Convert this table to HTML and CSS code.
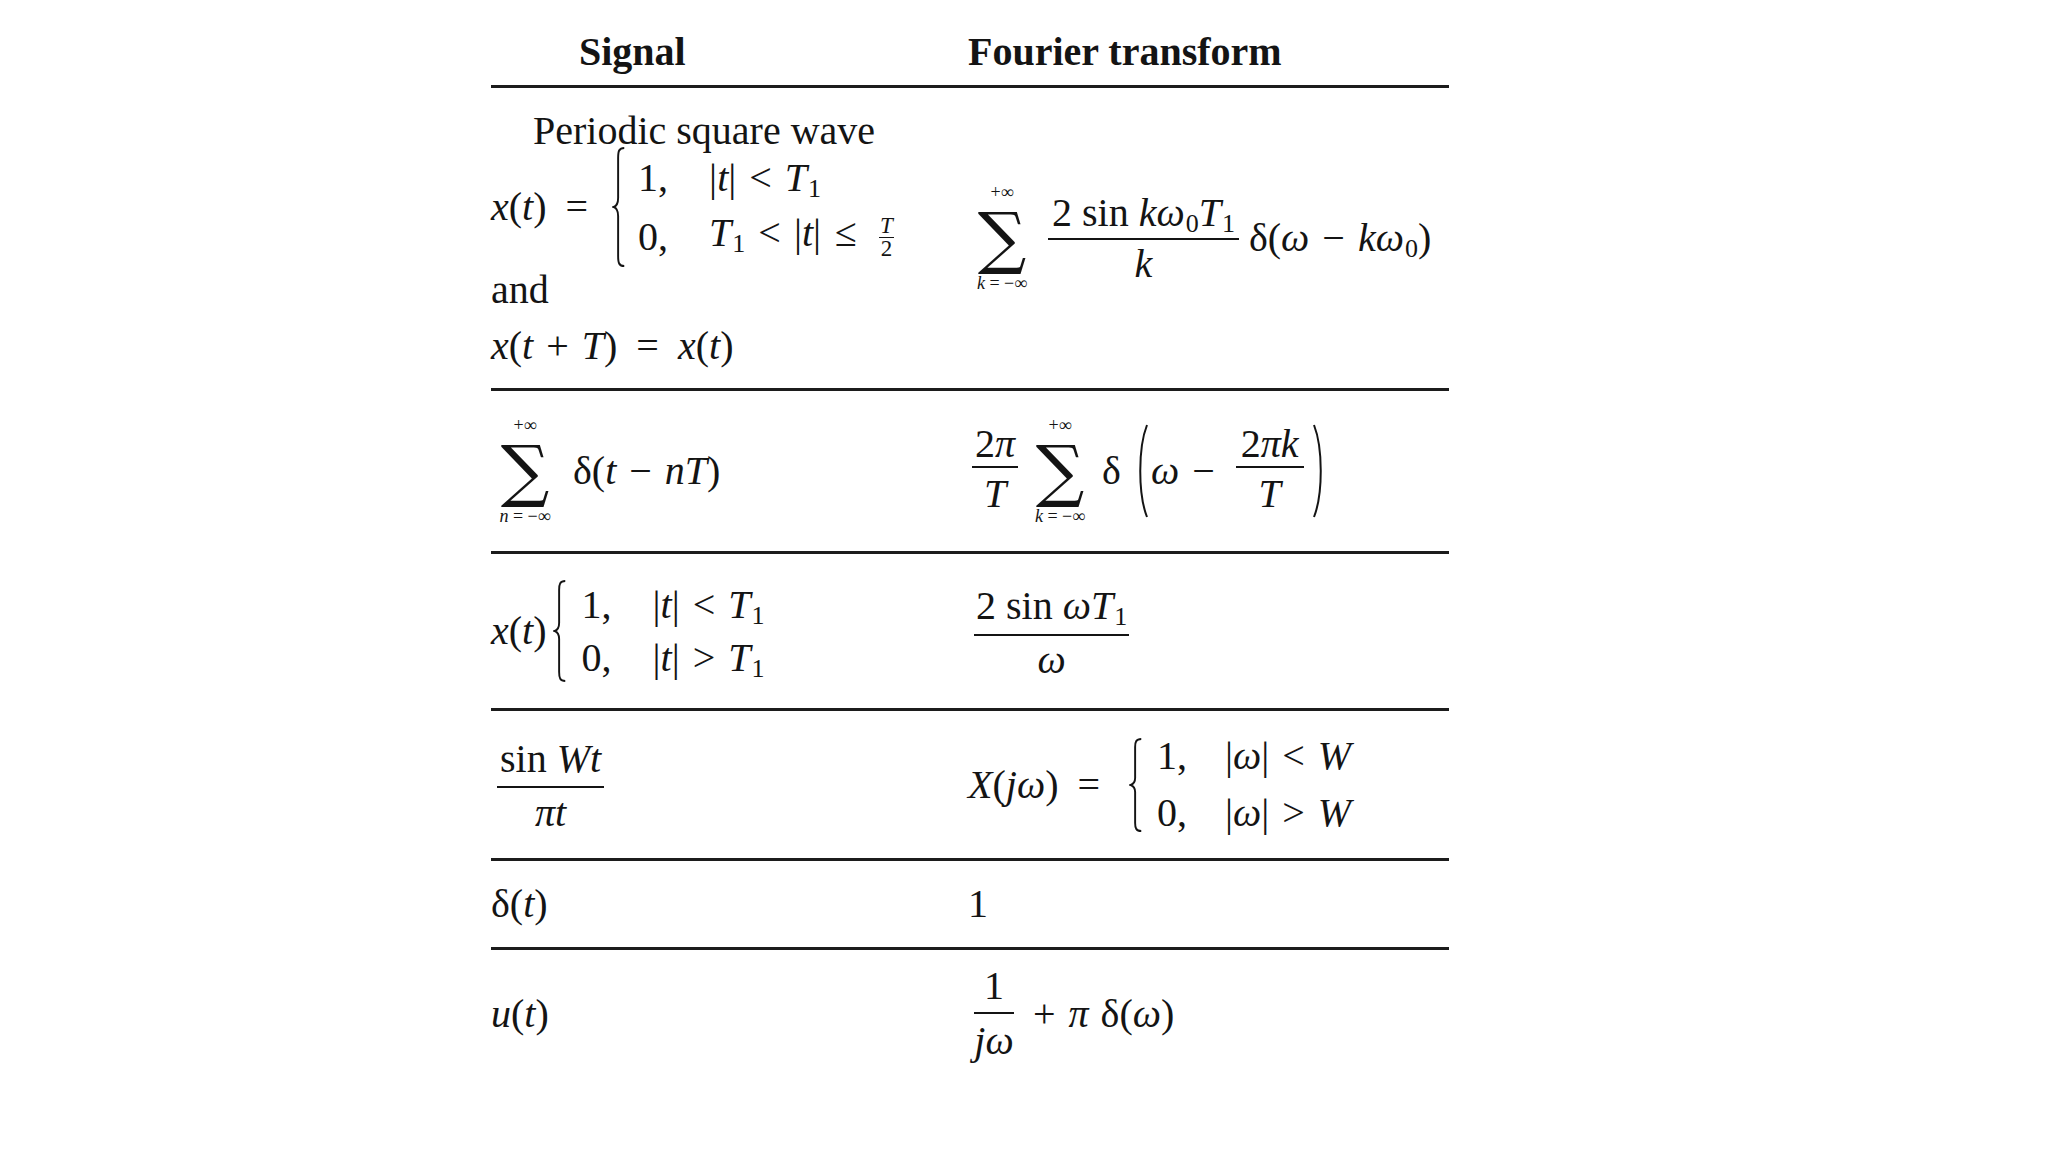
FILE: index.html
```html
<!DOCTYPE html>
<html>
<head>
<meta charset="utf-8">
<link rel="stylesheet" href="styles.css">
</head>
<body>
<div class="table">
  <div class="row head">
    <div class="cell c1"><span class="h-signal">Signal</span></div>
    <div class="cell c2"><span>Fourier transform</span></div>
  </div>

  <div class="row r1">
    <div class="cell c1 stack">
      <div class="title">Periodic square wave</div>
      <div class="defn">
        <span class="t"><i>x</i>(<i>t</i>)</span>
        <span class="t eq">=</span>
        <svg class="brace b1" viewBox="0 0 16 122" preserveAspectRatio="none"><path d="M14 2 C8 2 7 5 7 12 L7 52 C7 58 5 60 2 61 C5 62 7 64 7 70 L7 110 C7 117 8 120 14 120"/></svg>
        <div class="cases cs1">
          <span>1,</span><span>|<i>t</i>|<span class="op">&lt;</span><i>T</i><span class="sb">1</span></span>
          <span>0,</span><span><i>T</i><span class="sb">1</span><span class="op">&lt;</span>|<i>t</i>|<span class="op le">&le;</span><span class="sfrac"><span class="snum"><i>T</i></span><span class="sden">2</span></span></span>
        </div>
      </div>
      <div class="and">and</div>
      <div class="period"><i>x</i>(<i>t</i><span class="op">+</span><i>T</i>)<span class="op wide">=</span><i>x</i>(<i>t</i>)</div>
    </div>
    <div class="cell c2">
      <div class="math m1">
        <span class="sum"><span class="lim">+∞</span><span class="sig">∑</span><span class="lim"><i>k</i> = −∞</span></span>
        <span class="frac f1"><span class="num">2 sin <i>kω</i><span class="sb">0</span><i>T</i><span class="sb">1</span></span><span class="den"><i>k</i></span></span>
        <span class="t dd">δ(<i>ω</i><span class="op">−</span><i>kω</i><span class="sb">0</span>)</span>
      </div>
    </div>
  </div>

  <div class="row r2">
    <div class="cell c1">
      <div class="math">
        <span class="sum"><span class="lim">+∞</span><span class="sig">∑</span><span class="lim"><i>n</i> = −∞</span></span>
        <span class="t dl">δ(<i>t</i><span class="op">−</span><i>nT</i>)</span>
      </div>
    </div>
    <div class="cell c2">
      <div class="math m2">
        <span class="frac f2"><span class="num">2<i>π</i></span><span class="den"><i>T</i></span></span>
        <span class="sum s2"><span class="lim">+∞</span><span class="sig">∑</span><span class="lim"><i>k</i> = −∞</span></span>
        <span class="t d2">δ</span>
        <svg class="paren" viewBox="0 0 14 96" preserveAspectRatio="none"><path d="M12 2 C3 25 3 71 12 94"/></svg>
        <span class="t om"><i>ω</i><span class="op">−</span></span>
        <span class="frac f3"><span class="num">2<i>πk</i></span><span class="den"><i>T</i></span></span>
        <svg class="paren pr" viewBox="0 0 14 96" preserveAspectRatio="none"><path d="M2 2 C11 25 11 71 2 94"/></svg>
      </div>
    </div>
  </div>

  <div class="row r3">
    <div class="cell c1">
      <div class="defn">
        <span class="t"><i>x</i>(<i>t</i>)</span>
        <svg class="brace b3" viewBox="0 0 16 104" preserveAspectRatio="none"><path d="M14 2 C8 2 7 5 7 11 L7 44 C7 49 5 51 2 52 C5 53 7 55 7 60 L7 93 C7 99 8 102 14 102"/></svg>
        <div class="cases cs3">
          <span>1,</span><span>|<i>t</i>|<span class="op">&lt;</span><i>T</i><span class="sb">1</span></span>
          <span>0,</span><span>|<i>t</i>|<span class="op">&gt;</span><i>T</i><span class="sb">1</span></span>
        </div>
      </div>
    </div>
    <div class="cell c2">
      <div class="math m3">
        <span class="frac f4"><span class="num">2 sin <i>ωT</i><span class="sb">1</span></span><span class="den"><i>ω</i></span></span>
      </div>
    </div>
  </div>

  <div class="row r4">
    <div class="cell c1">
      <div class="math m4">
        <span class="frac f5"><span class="num">sin <i>Wt</i></span><span class="den"><i>πt</i></span></span>
      </div>
    </div>
    <div class="cell c2">
      <div class="defn">
        <span class="t"><i>X</i>(<i>jω</i>)<span class="op wide">=</span></span>
        <svg class="brace b4" viewBox="0 0 16 96" preserveAspectRatio="none"><path d="M14 2 C8 2 7 5 7 10 L7 41 C7 45 5 47 2 48 C5 49 7 51 7 55 L7 86 C7 91 8 94 14 94"/></svg>
        <div class="cases cs4">
          <span>1,</span><span>|<i>ω</i>|<span class="op">&lt;</span><i>W</i></span>
          <span>0,</span><span>|<i>ω</i>|<span class="op">&gt;</span><i>W</i></span>
        </div>
      </div>
    </div>
  </div>

  <div class="row r5">
    <div class="cell c1"><span class="t">δ(<i>t</i>)</span></div>
    <div class="cell c2"><span class="t">1</span></div>
  </div>

  <div class="row r6">
    <div class="cell c1"><span class="t"><i>u</i>(<i>t</i>)</span></div>
    <div class="cell c2">
      <div class="math m6">
        <span class="frac f6"><span class="num">1</span><span class="den"><i>jω</i></span></span>
        <span class="t"><span class="op">+</span><i>π</i><span class="gap">δ(<i>ω</i>)</span></span>
      </div>
    </div>
  </div>
</div>
</body>
</html>
```

FILE: styles.css
```css
html, body {
  margin: 0;
  padding: 0;
  background: #ffffff;
}
body {
  font-family: "Liberation Serif", "Times New Roman", serif;
  font-size: 40px;
  color: #141414;
  width: 2048px;
  height: 1152px;
  overflow: hidden;
}
i { font-style: italic; }

.table {
  width: 958px;
  margin-left: 491px;
}
.row {
  display: grid;
  grid-template-columns: 477px 481px;
  box-sizing: border-box;
  border-bottom: 3px solid #1c1c1c;
}
.cell {
  display: flex;
  align-items: center;
  line-height: 40px;
}
.head { height: 88px; padding-top: 18px; font-weight: bold; }
.head .h-signal { margin-left: 88px; }
.r1 { height: 303px; }
.r2 { height: 163px; }
.r3 { height: 157px; }
.r4 { height: 150px; }
.r5 { height: 89px; }
.r6 { height: 128px; border-bottom: none; }

.stack {
  flex-direction: column;
  align-items: flex-start;
  justify-content: flex-start;
  padding-top: 23px;
}
.title { margin-left: 42px; line-height: 40px; }
.defn { display: flex; align-items: center; }
.r1 .defn { margin-top: -5px; }
.and { margin-top: 2px; line-height: 40px; }
.period { margin-top: 16px; line-height: 40px; white-space: nowrap; }

.op { margin: 0 13px; font-style: normal; }
.op.wide { margin: 0 19px; }
.op.le { margin: 0 16px 0 14px; }

.eq { margin-left: 19px; }
.brace { fill: none; stroke: #141414; stroke-width: 2.2; flex: none; }
.b1 { width: 14px; height: 122px; margin-left: 24px; }
.b3 { width: 14px; height: 104px; margin-left: 6px; }
.b4 { width: 14px; height: 96px; margin-left: 10px; }

.cases {
  display: grid;
  align-items: center;
}
.cases > span { white-space: nowrap; }
.cs1 { grid-template-columns: 71px auto; grid-auto-rows: 59px; margin-left: 12px; }
.cs3 { grid-template-columns: 71px auto; grid-auto-rows: 53px; margin-left: 15px; }
.cs4 { grid-template-columns: 68px auto; grid-auto-rows: 57px; margin-left: 14px; }

.sb {
  font-size: 26px;
  vertical-align: -6px;
  line-height: 0;
  font-style: normal;
  margin-left: 1px;
}
.sfrac {
  display: inline-flex;
  flex-direction: column;
  align-items: center;
  vertical-align: middle;
  font-size: 23px;
  line-height: 22px;
  margin-left: 6px;
}
.snum { border-bottom: 1.5px solid #141414; padding: 0 1px; }

.math { display: flex; align-items: center; white-space: nowrap; }

.sum {
  display: inline-flex;
  flex-direction: column;
  align-items: center;
  width: 68px;
  flex: none;
}
.lim { font-size: 18px; line-height: 17px; white-space: nowrap; }
.sig {
  font-family: "DejaVu Serif", serif;
  font-size: 68px;
  line-height: 74px;
  height: 74px;
}

.frac {
  display: inline-flex;
  flex-direction: column;
  align-items: center;
  flex: none;
}
.num { border-bottom: 2.5px solid #141414; padding: 0 4px; line-height: 50px; white-space: nowrap; }
.den { line-height: 48px; }

.f1 { margin-left: 12px; }
.dd { margin-left: 10px; }

.dl { margin-left: 14px; }

.m2 .f2 { margin-left: 4px; }
.f2 .num, .f3 .num { line-height: 44px; padding: 0 3px; }
.f2 .den, .f3 .den { line-height: 52px; }
.s2 { margin-left: 8px; }
.d2 { margin-left: 8px; }
.paren { width: 14px; height: 96px; fill: none; stroke: #141414; stroke-width: 2; margin-left: 14px; flex: none; }
.om { margin-left: 2px; }
.f3 { margin-left: 8px; }
.f3 .num { padding: 0 5px; }
.pr { margin-left: 8px; }

.f4 { margin-left: 6px; }
.f4 .num { line-height: 56px; padding: 0 2px; }
.f4 .den { line-height: 48px; }

.m4 { margin-left: 6px; }
.f5 .num { line-height: 54px; padding: 0 3px; }
.f5 .den { line-height: 50px; }

.m6 { margin-left: 6px; }
.f6 .num { line-height: 52px; padding: 0 10px; }
.f6 .den { line-height: 54px; }
.m6 > .t { margin-left: 6px; }
.gap { margin-left: 12px; }
```
